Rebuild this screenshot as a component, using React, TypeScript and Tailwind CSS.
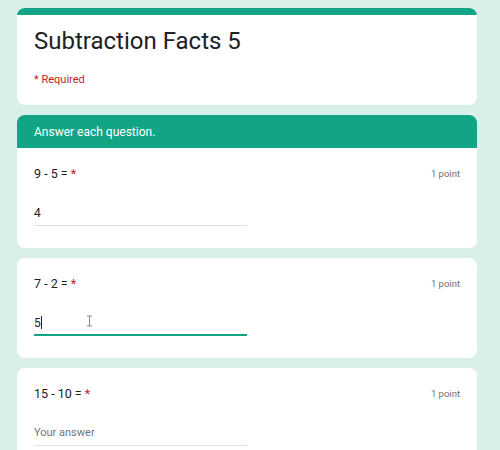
import React from 'react';

const GREEN = 'bg-[#12a585]';

type Q = { id: number; label: string; value?: string; active?: boolean };

const questions: Q[] = [
  { id: 1, label: '9 - 5 =', value: '4' },
  { id: 2, label: '7 - 2 =', value: '5', active: true },
  { id: 3, label: '15 - 10 =' },
];

const QuestionCard = ({ q, top }: { q: Q; top?: boolean }) => (
  <div className={`bg-white px-[17px] pt-[18px] pb-[22px] ${top ? 'rounded-b-lg' : 'rounded-lg'}`}>
    <div className="flex items-start justify-between">
      <div className="text-[12.5px] text-[#202124] leading-[16px]">
        {q.label} <span className="text-[#c5221f]">*</span>
      </div>
      <div className="text-[9.5px] text-[#6f6f6f] leading-[16px]">1 point</div>
    </div>
    <div className="relative mt-[23px] w-[213px]">
      <div className={`leading-[16px] pb-[4px] ${q.value ? 'text-[12px] text-[#202124]' : 'text-[11px] text-[#70757a]'}`}>
        {q.value ?? 'Your answer'}
        {q.active && <span className="inline-block w-px h-[13px] bg-[#202124] align-middle -mt-[2px]" />}
      </div>
      {q.active ? (
        <div className="h-[2px] -mt-[1px] bg-[#12a585]" />
      ) : (
        <div className="h-px bg-[#e0e0e0]" />
      )}
      {q.active && (
        <svg className="absolute left-[52px] top-[0px]" width="7" height="12" viewBox="0 0 7 12">
          <path d="M1 1h5M3.5 1v10M1 11h5" stroke="#8a8a8a" strokeWidth="1" fill="none" />
        </svg>
      )}
    </div>
  </div>
);

export default function App() {
  return (
    <div
      className="w-[500px] h-[450px] overflow-hidden bg-[#d9efea] px-[17px] pt-[8px]"
      style={{ fontFamily: 'Roboto, "Liberation Sans", sans-serif' }}
    >
      <div className="w-[460px] flex flex-col gap-[10px]">
        <div className="rounded-lg overflow-hidden bg-white">
          <div className={`h-[7px] ${GREEN}`} />
          <div className="px-[17px] pt-[9px] pb-[17px]">
            <h1 className="text-[24px] leading-[34px] text-[#202124]">Subtraction Facts 5</h1>
            <div className="mt-[14px] text-[11px] leading-[16px] text-[#c5221f]">* Required</div>
          </div>
        </div>
        <div>
          <div className={`${GREEN} rounded-t-lg h-[33px] px-[17px] flex items-center text-white text-[12px]`}>
            Answer each question.
          </div>
          <QuestionCard q={questions[0]} top />
        </div>
        <QuestionCard q={questions[1]} />
        <QuestionCard q={questions[2]} />
      </div>
    </div>
  );
}
